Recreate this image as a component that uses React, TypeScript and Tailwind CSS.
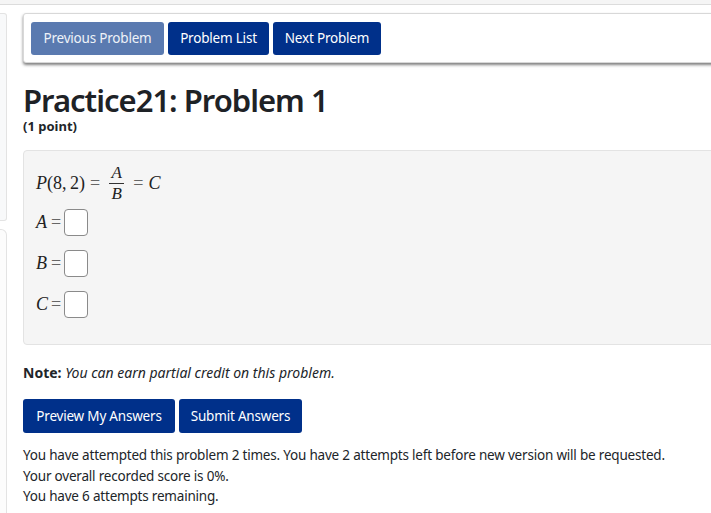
import React from "react";

const sans = { fontFamily: '"Noto Sans", "Open Sans", sans-serif' };

const MathVar = ({ children }: { children: React.ReactNode }) => (
  <span className="italic">{children}</span>
);

const AnswerRow = ({ name }: { name: string }) => (
  <div className="flex items-center h-[27px] font-['Liberation_Serif',serif] text-[18px]">
    <span className="italic text-[#222] w-[13px]">{name}</span>
    <span className="text-[#666] ml-[2px] w-[13px]">=</span>
    <input
      type="text"
      className="w-[24px] h-[27px] bg-white border border-[#8a8a8a] rounded-[4px] outline-none"
    />
  </div>
);

const App = () => {
  return (
    <div className="w-[711px] h-[513px] overflow-hidden bg-white text-[#212529]" style={sans}>
      {/* top strip */}
      <div className="h-[5px] bg-[#f5f5f5] border-b border-[#dcdcdc]" />

      <div className="flex">
        {/* sidebar edge */}
        <div className="w-[7px] shrink-0 flex flex-col pt-[8px] gap-[8px]">
          <div className="h-[208px] bg-[#f8f9fa] border border-l-0 border-[#e3e3e3] rounded-r-[3px]" />
          <div className="h-[300px] bg-[#fcfcfc] border border-l-0 border-[#e3e3e3] rounded-tr-[6px]" />
        </div>

        {/* main */}
        <div className="flex-1 pl-[16px] pt-[8px]">
          {/* nav */}
          <div className="w-[720px] h-[50px] bg-white border border-[#d8d8d8] rounded-[3px] shadow-[0_2px_3px_rgba(0,0,0,0.5)] flex items-center gap-[4px] px-[7px] text-[13.5px] tracking-[-0.2px]">
            <button className="h-[33px] w-[133px] rounded-[3px] bg-[#5a7ab0] text-[#eef2f8]">
              Previous Problem
            </button>
            <button className="h-[33px] w-[101px] rounded-[3px] bg-[#00308a] text-white">
              Problem List
            </button>
            <button className="h-[33px] w-[108px] rounded-[3px] bg-[#00308a] text-white">
              Next Problem
            </button>
          </div>

          {/* title */}
          <h2 className="mt-[20px] text-[31px] leading-[34px] font-semibold tracking-[-1px] text-[#1e2226]">
            Practice21: Problem 1
          </h2>
          <div className="mt-[1px] text-[13px] font-bold leading-[16px]">(1 point)</div>

          {/* problem */}
          <div className="mt-[16px] w-[720px] h-[195px] bg-[#f5f5f5] border border-[#e3e3e3] rounded-[4px] pl-[12px] pt-[12px]">
            <div className="flex items-center font-['Liberation_Serif',serif] text-[18px] text-[#222] h-[40px]">
              <MathVar>P</MathVar>
              <span>(8,&thinsp;2)</span>
              <span className="ml-[5px] mr-[9px] text-[#666]">=</span>
              <span className="inline-flex flex-col items-center">
                <span className="italic leading-[17px] text-[17px]">A</span>
                <span className="w-[15px] border-t border-[#333] mt-[2px] mb-[1px]" />
                <span className="italic leading-[17px] text-[17px]">B</span>
              </span>
              <span className="ml-[9px] mr-[5px] text-[#666]">=</span>
              <MathVar>C</MathVar>
            </div>
            <div className="flex flex-col gap-[14px] mt-[6px]">
              <AnswerRow name="A" />
              <AnswerRow name="B" />
              <AnswerRow name="C" />
            </div>
          </div>

          {/* note */}
          <p className="mt-[19px] text-[14px] leading-[18px]">
            <span className="font-bold">Note:</span>{" "}
            <span className="italic">You can earn partial credit on this problem.</span>
          </p>

          {/* submit buttons */}
          <div className="flex gap-[4px] mt-[17px] text-[13.5px] tracking-[-0.2px]">
            <button className="h-[34px] w-[152px] rounded-[3px] bg-[#00308a] text-white">
              Preview My Answers
            </button>
            <button className="h-[34px] w-[123px] rounded-[3px] bg-[#00308a] text-white">
              Submit Answers
            </button>
          </div>

          {/* attempts */}
          <div className="mt-[12px] text-[13.5px] leading-[20.5px] tracking-[-0.2px]">
            <div>
              You have attempted this problem 2 times. You have 2 attempts left before new version will be requested.
            </div>
            <div>Your overall recorded score is 0%.</div>
            <div>You have 6 attempts remaining.</div>
          </div>
        </div>
      </div>
    </div>
  );
};

export default App;
